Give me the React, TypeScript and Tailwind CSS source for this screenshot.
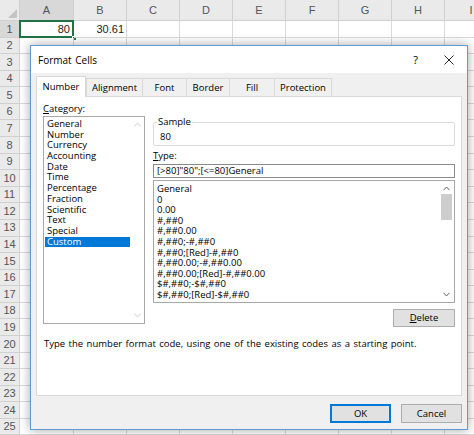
import React from 'react'

const cols = ['A', 'B', 'C', 'D', 'E', 'F', 'G', 'H', 'I']
const rows = Array.from({ length: 25 }, (_, i) => i + 1)

const categories = [
  'General', 'Number', 'Currency', 'Accounting', 'Date', 'Time', 'Percentage',
  'Fraction', 'Scientific', 'Text', 'Special', 'Custom',
]

const formats = [
  'General', '0', '0.00', '#,##0', '#,##0.00', '#,##0;-#,##0', '#,##0;[Red]-#,##0',
  '#,##0.00;-#,##0.00', '#,##0.00;[Red]-#,##0.00', '$#,##0;-$#,##0', '$#,##0;[Red]-$#,##0',
]

const tabs = [
  { label: 'Number', w: 'w-[50px]' },
  { label: 'Alignment', w: 'w-[57px]' },
  { label: 'Font', w: 'w-[45px]' },
  { label: 'Border', w: 'w-[44px]' },
  { label: 'Fill', w: 'w-[46px]' },
  { label: 'Protection', w: 'w-[58px]' },
]

function Chevron({ up }: { up?: boolean }) {
  return (
    <svg width="7" height="5" viewBox="0 0 7 5" className="block">
      <path d={up ? 'M0.5 4.2 L3.5 1 L6.5 4.2' : 'M0.5 0.8 L3.5 4 L6.5 0.8'} fill="none" stroke="currentColor" strokeWidth="1" />
    </svg>
  )
}

function Sheet() {
  return (
    <div className="flex flex-col font-['Liberation_Sans',sans-serif] text-[11px] text-[#222]">
      {/* column headers */}
      <div className="flex h-[21px]">
        <div className="relative w-[20px] shrink-0 bg-[#eaeaea] border-r border-b border-[#cfcfcf]">
          <div className="absolute right-[2px] bottom-[2px] w-0 h-0 border-l-[9px] border-l-transparent border-b-[9px] border-b-[#c4c4c4]" />
        </div>
        {cols.map((c, i) => (
          <div
            key={c}
            className={`${i === 0 ? 'w-[54px] bg-[#d8d8d8]' : 'w-[53px] bg-[#eaeaea]'} shrink-0 flex items-center justify-center border-r border-b border-[#d0d0d0] text-[#555]`}
          >
            {c}
          </div>
        ))}
      </div>
      {rows.map(r => (
        <div key={r} className="flex h-[16.58px]">
          <div
            className={`${r === 1 ? 'bg-[#d8d8d8]' : 'bg-[#eaeaea]'} w-[20px] shrink-0 flex items-center justify-center border-r border-b border-[#d0d0d0] text-[#555]`}
          >
            {r}
          </div>
          {cols.map((c, i) => (
            <div
              key={c}
              className={`${i === 0 ? 'w-[54px]' : 'w-[53px]'} relative shrink-0 border-r border-b border-[#dadada] flex items-center justify-end pr-[2px]`}
            >
              {r === 1 && c === 'A' && (
                <>
                  <div className="absolute -left-px -top-px -right-px -bottom-px border-2 border-[#217346]" />
                  <div className="absolute -right-[4px] -bottom-[4px] w-[5px] h-[5px] bg-[#217346] border border-white" />
                  <span className="relative mr-[1px]">80</span>
                </>
              )}
              {r === 1 && c === 'B' && <span>30.61</span>}
            </div>
          ))}
        </div>
      ))}
    </div>
  )
}

function FormatCells() {
  return (
    <div className="absolute left-[30px] top-[45px] w-[438px] h-[385px] flex flex-col border border-[#5d9ad6] bg-white shadow-[0_0_10px_rgba(0,0,0,0.35)] font-['Open_Sans',sans-serif] text-[9.5px] text-black [word-spacing:1px]">
      {/* title bar */}
      <div className="h-[27px] shrink-0 flex items-center pl-[7px] bg-white">
        <span className="text-[10px] leading-none">Format Cells</span>
        <span className="ml-auto mr-[26px] text-[11px] leading-none">?</span>
        <svg width="10" height="10" viewBox="0 0 10 10" className="mr-[13px]">
          <path d="M0.5 0.5 L9.5 9.5 M9.5 0.5 L0.5 9.5" stroke="#222" strokeWidth="1" />
        </svg>
      </div>

      <div className="flex-1 flex flex-col bg-[#f0f0f0] px-[5px]">
        {/* tabs */}
        <div className="mt-[3px] h-[20px] flex items-end">
          {tabs.map((t, i) => (
            <div
              key={t.label}
              className={`${t.w} ${i === 0 ? 'h-[21px] bg-white relative z-10 -mb-px' : 'h-[18px] bg-[#f0f0f0]'} ${i > 1 ? '-ml-px' : ''} shrink-0 flex items-center justify-center border border-b-0 border-[#d9d9d9] leading-none`}
            >
              {t.label}
            </div>
          ))}
        </div>

        {/* panel */}
        <div className="h-[300px] w-[426px] shrink-0 bg-white border border-[#d9d9d9] flex flex-col">
          <div className="flex">
            {/* category */}
            <div className="ml-[6px] w-[102px] flex flex-col">
              <div className="mt-[5px] h-[13px] leading-[13px]"><span className="underline underline-offset-1">C</span>ategory:</div>
              <div className="mt-[1px] h-[208px] border border-[#a8a8a8] flex">
                <div className="flex-1 flex flex-col pt-[2px] pl-[1px]">
                  {categories.map(c => (
                    <div
                      key={c}
                      className={`${c === 'Custom' ? 'bg-[#0078d7] text-white' : ''} h-[10.7px] leading-[10.7px] pl-[2px]`}
                    >
                      {c}
                    </div>
                  ))}
                </div>
                <div className="w-[14px] flex flex-col items-center justify-between py-[5px] text-[#c8c8c8]">
                  <Chevron up />
                  <Chevron />
                </div>
              </div>
            </div>

            {/* type side */}
            <div className="ml-[8px] w-[302px] flex flex-col">
              <fieldset className="mt-[19px] h-[30px] border border-[#dcdcdc] rounded-[2px] px-[3px]">
                <legend className="px-[1px] leading-[12px]">Sample</legend>
                <div className="pl-[3px] mt-[3px] leading-[12px]">80</div>
              </fieldset>
              <div className="mt-[3px] h-[13px] leading-[13px]"><span className="underline underline-offset-1">T</span>ype:</div>
              <div className="mt-[2px] h-[14px] border border-[#8a8a8a] flex items-center pl-[3px] leading-none">
                [&gt;80]"80";[&lt;=80]General
              </div>
              <div className="mt-[2px] h-[123px] border border-[#a8a8a8] flex">
                <div className="flex-1 flex flex-col pt-[3px] pl-[3px]">
                  {formats.map(f => (
                    <div key={f} className="h-[10.6px] leading-[10.6px]">{f}</div>
                  ))}
                </div>
                <div className="w-[15px] flex flex-col items-center py-[5px] text-[#606060]">
                  <Chevron up />
                  <div className="mt-[3px] w-[11px] h-[26px] bg-[#cdcdcd]" />
                  <div className="mt-auto"><Chevron /></div>
                </div>
              </div>
              <div className="mt-[6px] flex justify-end">
                <button className="w-[62px] h-[18px] bg-[#e1e1e1] border border-[#adadad] leading-none">
                  <span className="underline underline-offset-1">D</span>elete
                </button>
              </div>
            </div>
          </div>
          <div className="mt-[11px] ml-[7px] leading-[12px]">
            Type the number format code, using one of the existing codes as a starting point.
          </div>
        </div>

        {/* buttons */}
        <div className="mt-[8px] h-[19px] flex justify-end gap-[10px]">
          <button className="w-[61px] h-[19px] bg-[#e1e1e1] border-2 border-[#0078d7] leading-none">OK</button>
          <button className="w-[61px] h-[19px] bg-[#e1e1e1] border border-[#adadad] leading-none">Cancel</button>
        </div>
      </div>
    </div>
  )
}

export default function App() {
  return (
    <div className="relative w-[474px] h-[435px] overflow-hidden bg-white">
      <Sheet />
      <FormatCells />
    </div>
  )
}
